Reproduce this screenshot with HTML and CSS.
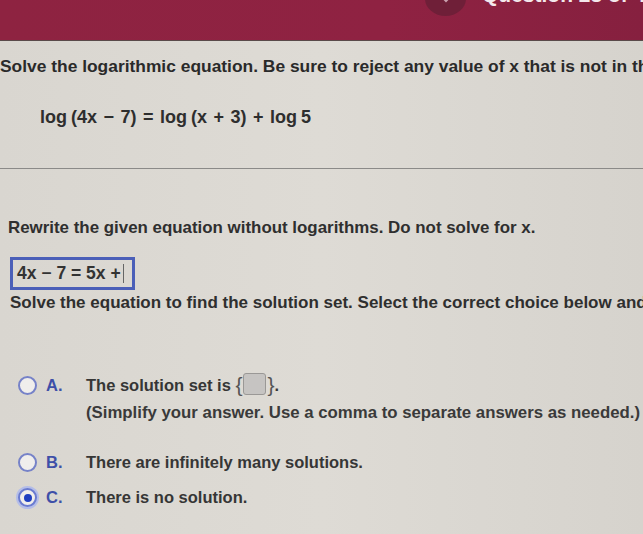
FILE: index.html
```html
<!DOCTYPE html>
<html>
<head>
<meta charset="utf-8">
<link rel="stylesheet" href="styles.css">
</head>
<body>
<div class="topbar">
  <div class="qnav">
    <span class="navdot"><svg width="12" height="8" viewBox="0 0 12 8"><path d="M2 1 L6 5 L10 1" stroke="#c9a0ae" stroke-width="2" fill="none"/></svg></span>
    <span class="qcount">Question 23 of 40</span>
  </div>
</div>
<div class="page">
  <p class="prompt">Solve the logarithmic equation. Be sure to reject any value of x that is not in the domain of the original logarithmic expressions.</p>
  <p class="equation">log<span class="sp"></span>(4x − 7) = log<span class="sp"></span>(x + 3) + log<span class="sp"></span>5</p>
  <hr class="sep">
  <p class="step">Rewrite the given equation without logarithms. Do not solve for x.</p>
  <div class="answerbox">4x − 7 = 5x +<span class="cursor"></span></div>
  <p class="step2">Solve the equation to find the solution set. Select the correct choice below and, if necessary, fill in the answer box to complete your choice.</p>
  <div class="choices">
    <div class="choice">
      <span class="radio"></span>
      <span class="letter">A.</span>
      <div class="ctext">
        <div class="line">The solution set is <span class="brace">{</span><span class="blank"></span><span class="brace">}</span>.</div>
        <div class="hint">(Simplify your answer. Use a comma to separate answers as needed.)</div>
      </div>
    </div>
    <div class="choice">
      <span class="radio"></span>
      <span class="letter">B.</span>
      <div class="ctext">There are infinitely many solutions.</div>
    </div>
    <div class="choice">
      <span class="radio on"></span>
      <span class="letter">C.</span>
      <div class="ctext">There is no solution.</div>
    </div>
  </div>
</div>
</body>
</html>
```
FILE: styles.css
```css
html, body {
  margin: 0;
  padding: 0;
}
body {
  width: 643px;
  height: 534px;
  overflow: hidden;
  background: linear-gradient(90deg, #d9d6d0 0%, #dedbd5 50%, #d6d3cd 100%);
  font-family: "Liberation Sans", Arial, sans-serif;
  color: #2b2b2b;
}
.topbar {
  height: 40px;
  background: linear-gradient(90deg, #8e2341 0%, #8f2242 60%, #86203f 100%);
  border-bottom: 1px solid #5a4a4a;
  position: relative;
  overflow: hidden;
}
.qnav {
  position: absolute;
  left: 425px;
  top: -19px;
  display: flex;
  align-items: center;
  gap: 16px;
  white-space: nowrap;
}
.navdot {
  width: 41px;
  height: 35px;
  border-radius: 50%;
  background: #6f1f38;
  display: flex;
  align-items: flex-start;
  justify-content: center;
  padding-top: 15px;
  box-sizing: border-box;
}
.qcount {
  color: #f4e8ec;
  font-weight: bold;
  font-size: 21px;
  margin-top: -8px;
}
.prompt {
  margin: 0;
  padding: 15px 0 0 0;
  white-space: nowrap;
  font-size: 17.4px;
  font-weight: bold;
  color: #2a2a2a;
}
.equation {
  margin: 0;
  padding: 30px 0 0 40px;
  font-size: 18px;
  font-weight: bold;
  color: #2e2e2e;
  word-spacing: 1.5px;
}
.sp {
  display: inline-block;
  width: 4px;
}
.sep {
  margin: 40px 0 0 0;
  border: 0;
  border-top: 1.5px solid #8b8a88;
  height: 0;
}
.step {
  margin: 0;
  padding: 49px 0 0 8px;
  font-size: 16.9px;
  font-weight: bold;
  color: #2f2f2f;
  white-space: nowrap;
}
.answerbox {
  margin: 19px 0 0 10px;
  width: 115px;
  height: 27px;
  border: 3px solid #4b5fb8;
  box-sizing: content-box;
  font-size: 17.5px;
  font-weight: bold;
  color: #333;
  display: flex;
  align-items: center;
  padding-left: 4px;
}
.cursor {
  display: inline-block;
  width: 1px;
  height: 19px;
  background: #666;
  margin-left: 2px;
}
.step2 {
  margin: 0;
  padding: 3px 0 0 10px;
  white-space: nowrap;
  font-size: 17px;
  font-weight: bold;
  color: #2f2f2f;
}
.choices {
  padding: 63px 0 0 18px;
  display: flex;
  flex-direction: column;
  gap: 0;
}
.choice {
  display: flex;
  align-items: flex-start;
  font-size: 16.5px;
  line-height: 19px;
  font-weight: bold;
  color: #363636;
  white-space: nowrap;
  min-height: 35px;
}
.choice:first-child {
  min-height: 77px;
}
.radio {
  width: 19px;
  height: 19px;
  border: 2px solid #7682c8;
  border-radius: 50%;
  box-sizing: border-box;
  background: #f0eeec;
  flex: none;
  position: relative;
}
.radio.on {
  border-color: #6a7bd0;
  box-shadow: 0 0 0 2px #b4bde8;
}
.radio.on::after {
  content: "";
  position: absolute;
  left: 3.5px;
  top: 3.5px;
  width: 8px;
  height: 8px;
  border-radius: 50%;
  background: #1f3fc0;
}
.letter {
  color: #3e4fa8;
  width: 40px;
  padding-left: 9px;
  flex: none;
}
.ctext {
  display: flex;
  flex-direction: column;
  gap: 8px;
}
.hint {
  color: #3a3a3a;
  font-size: 16.8px;
}
.brace {
  font-weight: normal;
  font-size: 21px;
  line-height: 17px;
  color: #555;
  vertical-align: -1px;
}
.blank {
  display: inline-block;
  width: 21px;
  height: 20px;
  background: #c6c4c2;
  border: 1px solid #9a9896;
  border-radius: 3px;
  vertical-align: -3.5px;
  margin: -6px 1px 0 1px;
}
```
